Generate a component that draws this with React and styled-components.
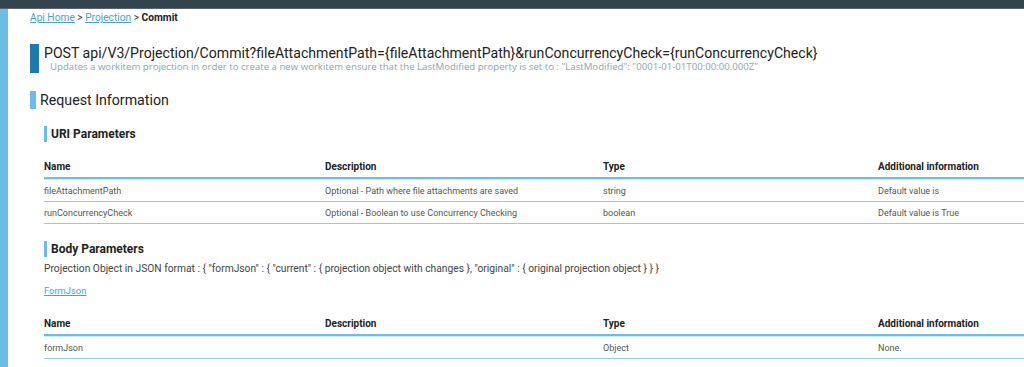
import React from "react";
import styled, { createGlobalStyle } from "styled-components";

const Global = createGlobalStyle`
  html, body { margin: 0; padding: 0; background: #fff; overflow: hidden; }
  body { font-family: Roboto, "Open Sans", sans-serif; color: #333; }
`;

const TopBar = styled.div`
  height: 8px;
  background: #34444f;
  border-bottom: 1px solid #56646e;
`;

const Shell = styled.div`
  display: flex;
  min-height: 358px;
`;

const SideStrip = styled.div`
  width: 8px;
  flex: 0 0 8px;
  background: #6bbde6;
`;

const Main = styled.main`
  flex: 1;
  padding: 0 0 0 22px;
  min-width: 0;
`;

const Crumbs = styled.div`
  font-size: 10.2px;
  line-height: 14px;
  padding-top: 2px;
  color: #333;
  a { color: #4a9fd5; text-decoration: underline; }
  b { font-weight: 700; color: #222; }
`;

const TitleBlock = styled.div`
  display: flex;
  margin-top: 19px;
`;

const TitleBar = styled.div`
  width: 9px;
  height: 29px;
  background: #1f7aac;
  flex: 0 0 9px;
`;

const TitleText = styled.div`
  padding-left: 5px;
`;

const H1 = styled.h1`
  margin: 0;
  padding-top: 2px;
  font-weight: 400;
  font-size: 14.1px;
  line-height: 15px;
  color: #222;
`;

const Sub = styled.div`
  font-family: "Open Sans", sans-serif;
  font-size: 9.65px;
  line-height: 12px;
  color: #8aa4b8;
  padding-left: 6px;
`;

const H2 = styled.h2`
  margin: 18px 0 0;
  font-weight: 400;
  font-size: 14.2px;
  line-height: 18px;
  color: #222;
  display: flex;
  align-items: center;
  &::before {
    content: "";
    width: 6px;
    height: 18px;
    background: #6bbde6;
    margin-right: 4px;
  }
`;

const Section = styled.section`
  padding-left: 14px;
`;

const H3 = styled.h3`
  margin: ${p => p.$top}px 0 0;
  font-weight: 700;
  font-size: 12px;
  line-height: 16px;
  color: #222;
  display: flex;
  align-items: center;
  &::before {
    content: "";
    width: 3px;
    height: 16px;
    background: #6bbde6;
    margin-right: 4px;
  }
`;

const Para = styled.p`
  margin: 5px 0 0;
  font-size: 10.25px;
  line-height: 14px;
  color: #444;
`;

const Link = styled.a`
  display: block;
  width: max-content;
  margin-top: 8px;
  font-size: 9.4px;
  line-height: 14px;
  color: #4a9fd5;
  text-decoration: underline;
`;

const Table = styled.div`
  margin-top: ${p => p.$top}px;
`;

const Row = styled.div`
  display: grid;
  grid-template-columns: 281px 278px 275px 1fr;
  font-size: ${p => (p.$head ? 10 : 9)}px;
  font-weight: ${p => (p.$head ? 700 : 400)};
  color: ${p => (p.$head ? "#222" : "#555")};
  line-height: 12px;
  padding: ${p => (p.$head ? "0 0 4px" : "5px 0 4px")};
  border-bottom: ${p => (p.$head ? "2px solid #6fbce6" : "1px solid #8fcdee")};
  box-shadow: ${p => (p.$head ? "0 1px 0 #cfe9f7" : "none")};
  margin-bottom: ${p => (p.$head ? 1 : 0)}px;
`;

const Cell = styled.div`
  white-space: nowrap;
`;

function ParamTable({ top, rows }) {
  return (
    <Table $top={top}>
      <Row $head>
        <Cell>Name</Cell>
        <Cell>Description</Cell>
        <Cell>Type</Cell>
        <Cell>Additional information</Cell>
      </Row>
      {rows.map(r => (
        <Row key={r[0]}>
          {r.map((c, i) => (
            <Cell key={i}>{c}</Cell>
          ))}
        </Row>
      ))}
    </Table>
  );
}

export default function App() {
  return (
    <>
      <Global />
      <TopBar />
      <Shell>
        <SideStrip />
        <Main>
          <Crumbs>
            <a href="#">Api Home</a> &gt; <a href="#">Projection</a> &gt; <b>Commit</b>
          </Crumbs>
          <TitleBlock>
            <TitleBar />
            <TitleText>
              <H1>POST api/V3/Projection/Commit?fileAttachmentPath={"{fileAttachmentPath}"}&amp;runConcurrencyCheck={"{runConcurrencyCheck}"}</H1>
              <Sub>
                Updates a workitem projection in order to create a new workitem ensure that the LastModified property is set to : "LastModified": "0001-01-01T00:00:00.000Z"
              </Sub>
            </TitleText>
          </TitleBlock>
          <H2>Request Information</H2>
          <Section>
            <H3 $top={17}>URI Parameters</H3>
            <ParamTable
              top={19}
              rows={[
                ["fileAttachmentPath", "Optional - Path where file attachments are saved", "string", "Default value is"],
                ["runConcurrencyCheck", "Optional - Boolean to use Concurrency Checking", "boolean", "Default value is True"],
              ]}
            />
            <H3 $top={17}>Body Parameters</H3>
            <Para>
              Projection Object in JSON format : {"{"} "formJson" : {"{"} "current" : {"{"} projection object with changes {"}"}, "original" : {"{"} original projection object {"}"} {"}"} {"}"}
            </Para>
            <Link href="#">FormJson</Link>
            <ParamTable top={20} rows={[["formJson", "", "Object", "None."]]} />
          </Section>
        </Main>
      </Shell>
    </>
  );
}
